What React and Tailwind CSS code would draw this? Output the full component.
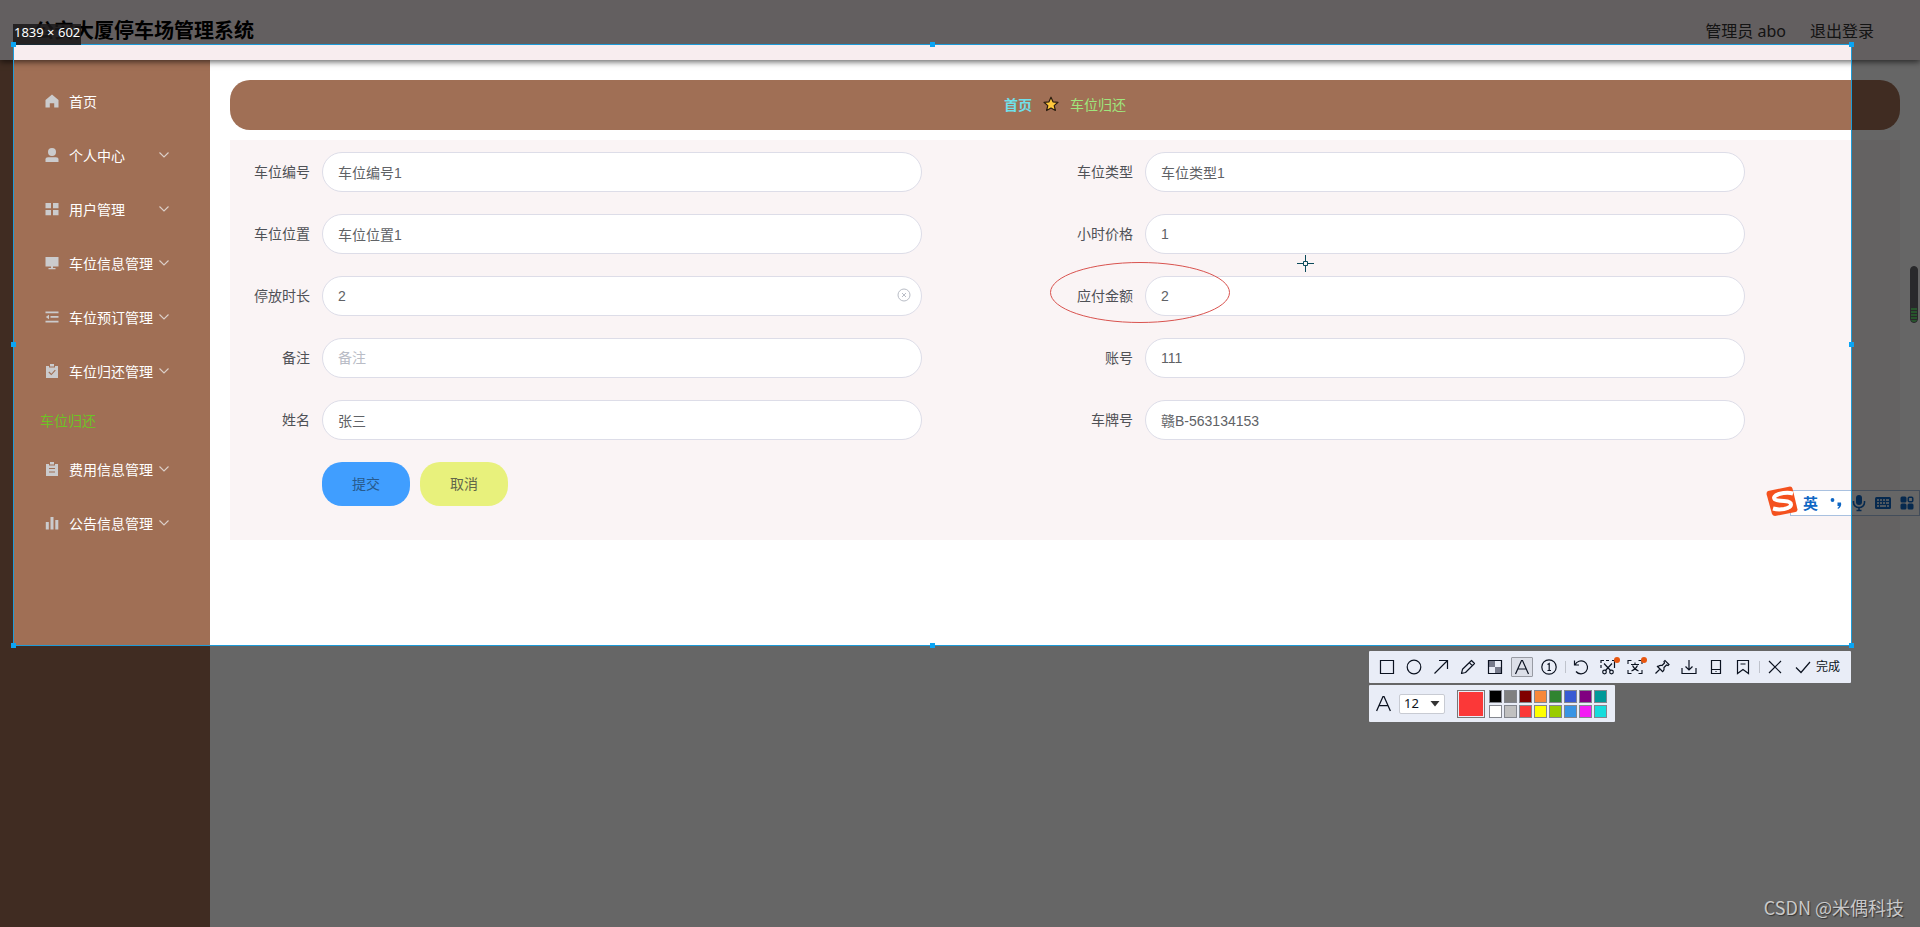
const ICONS = {
  home: <path d="M7 .5 0.5 6v7.5h4.3V9.3h4.4v4.2h4.3V6z" />,
  user: (
    <>
      <circle cx="7" cy="4" r="4" />
      <path d="M.5 14v-2.500C.5 10 1.500 9.200 3 9.200h8c1.500 0 2.500.8 2.500 2.300V14z" />
    </>
  ),
  grid: <path d="M.5 1h5.500v5.200H.5zM8 1h5.500v5.200H8zM.5 8h5.500v5.200H.5zM8 8h5.500v5.200H8z" />,
  monitor: <path d="M.5 1h13v9.500h-5.500v1.500h2.500v1.200h-7V12H6v-1.500H.5z" />,
  fold: <path d="M.5 1.500h13v1.700H.5zM5.500 6.100h8v1.700h-8zM.5 10.700h13v1.700H.5zM.8 7l3.200-2.200v4.400z" />,
  checked: (
    <>
      <path d="M1 2h3v1.500h6V2h3v12H1zM5 0h4v2.500H5z" />
      <path d="M3.800 8l2.500 2.500 4-4.300" fill="none" stroke="#a06f55" strokeWidth="1.100" />
    </>
  ),
  order: (
    <>
      <path d="M1 2h3v1.500h6V2h3v12H1zM5 0h4v2.500H5z" />
      <path d="M4 6.500h6M4 10h6" fill="none" stroke="#a06f55" strokeWidth="1.200" />
    </>
  ),
  chart: <path d="M.8 6h3v7.500h-3zM5.500 1h3v12.500h-3zM10.300 4h3v9.500h-3z" />,
};

const MENU = [
  { icon: "home", label: "首页" },
  { icon: "user", label: "个人中心", more: true },
  { icon: "grid", label: "用户管理", more: true },
  { icon: "monitor", label: "车位信息管理", more: true },
  { icon: "fold", label: "车位预订管理", more: true },
  { icon: "checked", label: "车位归还管理", more: true, child: "车位归还" },
  { icon: "order", label: "费用信息管理", more: true },
  { icon: "chart", label: "公告信息管理", more: true },
];

const FIELDS = [
  { id: "code", label: "车位编号", value: "车位编号1" },
  { id: "type", label: "车位类型", value: "车位类型1" },
  { id: "place", label: "车位位置", value: "车位位置1" },
  { id: "price", label: "小时价格", value: "1" },
  { id: "hours", label: "停放时长", value: "2", clear: true },
  { id: "amount", label: "应付金额", value: "2", circled: true },
  { id: "remark", label: "备注", value: "", placeholder: "备注" },
  { id: "account", label: "账号", value: "111" },
  { id: "name", label: "姓名", value: "张三" },
  { id: "plate", label: "车牌号", value: "赣B-563134153" },
];

const letterA = <path d="M1.500 15 7.500 1.500h1L14.500 15M4 10h8" />;

const TOOLS = [
  { name: "矩形", art: <path d="M1.500 1.500h13v13h-13z" /> },
  { name: "椭圆", art: <circle cx="8" cy="8" r="6.800" /> },
  { name: "箭头", art: <path d="M1.500 14.500 14.500 1.500M6 1.500h8.500V10" /> },
  { name: "画笔", art: <path d="M1.500 14.500l1-4.200L11.500 1.500l3 3-9 9zM9.300 3.700l3 3" strokeLinejoin="round" /> },
  {
    name: "马赛克",
    art: (
      <>
        <path d="M1.500 1.500h6.500v6.500h-6.500zM8 8h6.500v6.500H8z" fill="#777b8c" stroke="none" />
        <path d="M1.500 1.500h13v13h-13z" />
      </>
    ),
  },
  { name: "文字", art: letterA, active: true },
  { name: "序号", art: <><circle cx="8" cy="8" r="7.200" /><path d="M6.500 5.500 8.200 4.500v7M6.500 11.500h3.500" /></> },
  null,
  { name: "撤销", art: <path d="M1.500 1.500v4.500h4.500M2 6a6.500 6.500 0 1 1 1 6.500" /> },
  {
    name: "截图",
    dot: true,
    art: <><path d="M1 4V1.500h3M12 1.500h2.500V9M1 6v3M6 1.500h3M4 4.500l6.500 7M12 4.500l-6.500 7" /><circle cx="4.500" cy="13" r="1.800" /><circle cx="11.500" cy="13" r="1.800" /></>,
  },
  {
    name: "翻译",
    dot: true,
    art: <path d="M1 5V1.500h3.500M11.500 1.500H15V5M1 11v3.500h3.500M11.500 14.500H15V11M8 3.500v2M4 5.500h8M5.500 6.500q1.500 3.500 6 5.500M10.500 6.500q-1.500 3.500-6 5.500" strokeWidth="1.100" />,
  },
  { name: "固定", art: <path d="M1.500 14.500l4.500-4.500M3 7l6 6M4 7.500q2-1.500 4-1l2.500-2.500-.5-1.500 1-1 4 4-1 1-1.500-.5-2.500 2.500q.5 2-1 4" /> },
  { name: "保存", art: <path d="M8 1v10M4.500 7.500 8 11l3.500-3.500M1 9v5.500h14V9" /> },
  { name: "手机", art: <path d="M3.500 1.500h9v13h-9zM3.500 10.500h9M7.500 12.500h1" /> },
  { name: "收藏", art: <path d="M2.500 1.500h11v13L8 10.500l-5.500 4zM5.500 5h5" /> },
  null,
  { name: "关闭", art: <path d="M2 2l12 12M14 2 2 14" /> },
];

const SWATCHES = [
  ["黑", "bg-black"], ["灰", "bg-[#808080]"], ["深红", "bg-[#800000]"], ["橙", "bg-[#f7883a]"],
  ["绿", "bg-[#308430]"], ["蓝", "bg-[#385ad3]"], ["紫", "bg-[#800080]"], ["青", "bg-[#009999]"],
  ["白", "bg-white"], ["浅灰", "bg-[#c0c0c0]"], ["红", "bg-[#fb3838]"], ["黄", "bg-[#ffff00]"],
  ["黄绿", "bg-[#99cc00]"], ["浅蓝", "bg-[#3894e4]"], ["洋红", "bg-[#f31bf3]"], ["浅青", "bg-[#16dcdc]"],
];

function Header() {
  return (
    <header className="relative flex h-[60px] items-center justify-between bg-[#f8edef] pl-[34px] pr-[46px] pt-[2px] shadow-[0_2px_6px_rgba(0,0,0,0.6)]">
      <h1 className="text-[20px] font-bold text-black">公安大厦停车场管理系统</h1>
      <nav className="flex gap-6 text-[16px] text-[#333]">
        <span>管理员 abo</span>
        <a href="#logout">退出登录</a>
      </nav>
    </header>
  );
}

function Sidebar() {
  return (
    <aside className="w-[210px] shrink-0 bg-[#a06f55] pt-[14px]">
      <ul>
        {MENU.map((item) => (
          <li key={item.label}>
            <button type="button" className="flex h-[54px] w-full items-center gap-[10px] pl-[45px] text-[14px] text-white">
              <svg viewBox="0 0 14 14" className="size-[14px] fill-[#cbcbcd]">{ICONS[item.icon]}</svg>
              <span className="w-[84px] text-left">{item.label}</span>
              {item.more && (
                <svg viewBox="0 0 10 6" className="-ml-1 h-[6px] w-[10px] fill-none stroke-[#dcd0ca]">
                  <path d="M.5.5 5 5 9.500.5" strokeWidth="1.100" />
                </svg>
              )}
            </button>
            {item.child && (
              <a href="#return" className="flex h-[44px] items-center pl-10 text-[14px] text-[#6cc424]">{item.child}</a>
            )}
          </li>
        ))}
      </ul>
    </aside>
  );
}

function Field({ field }) {
  return (
    <div className="relative mb-[22px] flex h-10">
      <label htmlFor={field.id} className="w-20 shrink-0 pr-3 text-right text-[14px] leading-10 text-[#4f5156]">{field.label}</label>
      <div className="relative w-full max-w-[600px]">
        <input
          id={field.id}
          defaultValue={field.value}
          placeholder={field.placeholder}
          className="h-10 w-full rounded-[20px] border border-[#dddde8] bg-white px-[15px] text-[14px] text-[#606266] outline-none placeholder:text-[#b9bcc6]"
        />
        {field.clear && (
          <button type="button" aria-label="清空" className="absolute right-[11px] top-3 size-[14px]">
            <svg viewBox="0 0 14 14" className="size-[14px] fill-none stroke-[#b9bdc6]">
              <circle cx="7" cy="7" r="6" />
              <path d="M5 5l4 4M9 5 5 9" />
            </svg>
          </button>
        )}
      </div>
      {field.circled && (
        <svg viewBox="0 0 180 62" className="pointer-events-none absolute -top-[15px] left-[-15px] h-[62px] w-[180px] fill-none stroke-[#d9534f]">
          <ellipse cx="90" cy="31.500" rx="89.500" ry="30" />
        </svg>
      )}
    </div>
  );
}

function Content() {
  return (
    <main className="min-w-0 flex-1 bg-white p-5">
      <nav className="flex h-[50px] items-center justify-center rounded-[20px] bg-[#a06f55] pb-[2px] text-[14px]">
        <a href="#home" className="font-bold text-[#6fe0ea]">首页</a>
        <svg viewBox="0 0 16 16" className="mx-[11px] size-4">
          <path d="M8 1.200l2 4.600 5 .5-3.800 3.300 1.200 4.900L8 12l-4.400 2.500 1.200-4.900L1 6.300l5-.5z" fill="#ffc83d" stroke="#2a1c10" strokeWidth="1.200" strokeLinejoin="round" />
        </svg>
        <span className="text-[#9fe67c]">车位归还</span>
      </nav>
      <form className="mt-[10px] bg-[#faf4f5] p-3" onSubmit={(e) => e.preventDefault()}>
        <div className="grid grid-cols-2">
          {FIELDS.map((f) => <Field key={f.id} field={f} />)}
        </div>
        <div className="mb-[22px] flex gap-[10px] pl-20 text-[14px]">
          <button type="submit" className="h-11 w-[88px] rounded-[20px] bg-[#409eff] text-[#285a8c]">提交</button>
          <button type="button" className="h-11 w-[88px] rounded-[20px] bg-[#e8f17c] text-[#62664a]">取消</button>
        </div>
      </form>
    </main>
  );
}

function InputMethodBar() {
  return (
    <div className="absolute right-0 top-[486px] h-8 w-[154px]">
      <div className="ml-6 mt-1 flex h-[26px] items-center border border-[#a9c1e0] bg-white pl-3 text-[#0f67c4]">
        <span className="w-[24px] text-[15px] font-bold">英</span>
        <svg viewBox="0 0 12 14" className="ml-[3px] h-[14px] w-3 fill-current">
          <circle cx="2.500" cy="4" r="1.900" />
          <path d="M7.500 6.500h3.500q1 4-3 6.500l-.5-1q1.500-1 1.500-2H7.500z" />
        </svg>
        <svg viewBox="0 0 14 18" className="ml-[10px] h-[18px] w-[14px] fill-current">
          <rect x="4" y="1" width="6" height="10" rx="3" />
          <path d="M1.500 7v1.500a5.500 5 0 0 0 11 0V7M7 13v3M4.500 16.500h5" fill="none" stroke="currentColor" strokeWidth="1.600" />
        </svg>
        <svg viewBox="0 0 16 12" className="ml-[9px] h-3 w-4">
          <rect width="16" height="12" rx="1.500" fill="currentColor" />
          <path d="M2 3h2M5 3h2M8 3h2M11 3h3M2 6h2M5 6h2M8 6h2M11 6h3M2 9h2M5 9h6M12 9h2" stroke="#fff" strokeWidth="1.700" />
        </svg>
        <svg viewBox="0 0 14 14" className="ml-[9px] size-[14px] fill-current">
          <rect x=".5" y=".5" width="6" height="6" rx="1.500" />
          <rect x=".5" y="7.500" width="6" height="6" rx="1.500" />
          <rect x="7.500" y="7.500" width="6" height="6" rx="1.500" />
          <rect x="8.300" y="1.300" width="4.400" height="4.400" rx="1" fill="none" stroke="currentColor" strokeWidth="1.600" />
        </svg>
      </div>
      <svg viewBox="0 0 32 32" className="absolute left-0 top-0 size-8">
        <path d="M2 5 24 .5q2 0 2.500 2l5 21q0 2-2 2.500L9 30q-2 0-3-2L.5 8Q.5 5.500 2 5z" fill="#f4511e" />
        <path d="M27 7.500q-6-1.500-14 .5-7 2.500-4 5.500 2 1.500 9 1.500 7 .5 7 3.500 0 3-7 4.500-6 1-11-.5" fill="none" stroke="#fff" strokeWidth="4" />
      </svg>
    </div>
  );
}

function Handle({ className }) {
  return <span className={"absolute size-[5px] bg-[#0aa5f5] " + className} />;
}

function CaptureTools() {
  return (
    <div className="absolute right-0 top-full mt-[6px] flex flex-col items-start gap-[2px] text-[#0b1220]">
      <div className="flex h-8 items-center rounded-[1px] bg-[#e9edf7] pl-[5px] pr-[11px]">
        {TOOLS.map((t, i) =>
          t ? (
            <button key={t.name} type="button" aria-label={t.name} className="relative flex h-8 w-[27px] items-center justify-center">
              <span className={t.active ? "flex h-5 w-[22px] items-center justify-center rounded-[1px] border border-[#989ba3] bg-[#dcdfe8]" : "flex"}>
                <svg viewBox="0 0 16 16" className="size-4 fill-none stroke-current" strokeWidth="1.200">{t.art}</svg>
              </span>
              {t.dot && <span className="absolute right-[2px] top-[6px] size-[6px] rounded-full bg-[#e8560f]" />}
            </button>
          ) : (
            <span key={i} className="mx-[2px] h-3 w-px bg-[#bfc3cc]" />
          )
        )}
        <button type="button" className="ml-[6px] flex items-center gap-[5px] whitespace-nowrap text-[12px]">
          <svg viewBox="0 0 16 16" className="size-4 fill-none stroke-current" strokeWidth="1.200"><path d="M1 8.500l5 5L15 3" /></svg>
          完成
        </button>
      </div>
      <div className="flex h-[37px] items-center rounded-[1px] bg-[#e9edf7] pl-[6px] pr-2">
        <svg viewBox="0 0 16 16" className="size-[17px] fill-none stroke-current" strokeWidth="1.200">{letterA}</svg>
        <div className="relative ml-[7px] flex items-center">
          <select aria-label="字号" defaultValue="12" className="h-5 w-[46px] appearance-none rounded-[2px] border border-[#c8cbd3] bg-white pb-[2px] pl-1 font-['Noto_Sans'] text-[13px] leading-4 outline-none">
            <option>12</option>
            <option>16</option>
          </select>
          <svg viewBox="0 0 10 6" className="pointer-events-none absolute right-[5px] h-[6px] w-[10px] fill-[#333]"><path d="M.5 0h9L5 5.500z" /></svg>
        </div>
        <button type="button" aria-label="当前颜色" className="ml-3 size-7 border border-[#777] bg-[#fb3838] shadow-[inset_0_0_0_1px_#e9edf7]" />
        <div className="ml-1 grid grid-cols-8 gap-[2px]">
          {SWATCHES.map(([name, color]) => (
            <button key={name} type="button" aria-label={name} className={"size-[13px] border border-[#83868e] " + color} />
          ))}
        </div>
      </div>
    </div>
  );
}

function CaptureOverlay() {
  return (
    <>
      <div className="pointer-events-none absolute inset-0 overflow-hidden">
        <div className="absolute left-[13px] right-[68px] top-11 h-[602px] shadow-[0_0_0_3000px_rgba(0,0,0,0.6)]" />
      </div>
      <div className="absolute left-[13px] right-[68px] top-11 h-[602px] border border-[#1d9bd8]">
        <span className="absolute -left-px bottom-full flex h-[21px] items-center whitespace-nowrap bg-[#1a1819]/85 px-px pb-[3px] font-['Noto_Sans'] text-[13px] text-white">1839 × 602</span>
        <Handle className="-left-[3px] -top-[3px]" />
        <Handle className="-top-[3px] left-[calc(50%-3px)]" />
        <Handle className="-right-[3px] -top-[3px]" />
        <Handle className="-left-[3px] top-[calc(50%-3px)]" />
        <Handle className="-right-[3px] top-[calc(50%-3px)]" />
        <Handle className="-bottom-[3px] -left-[3px]" />
        <Handle className="-bottom-[3px] left-[calc(50%-3px)]" />
        <Handle className="-bottom-[3px] -right-[3px]" />
        <svg viewBox="0 0 17 17" className="absolute left-[1283px] top-[210px] size-[17px] fill-none stroke-[#0b4a5a]">
          <path d="M8.500 0v6M8.500 11v6M0 8.500h6M11 8.500h6M6.500 6.500h4v4h-4z" />
        </svg>
        <CaptureTools />
      </div>
    </>
  );
}

export default function App() {
  return (
    <div className="relative flex min-h-screen flex-col overflow-hidden bg-white font-['Noto_Sans','Noto_Sans_CJK_SC',sans-serif] [&_form]:font-['Liberation_Sans','Noto_Sans_CJK_SC',sans-serif]">
      <Header />
      <div className="flex flex-1">
        <Sidebar />
        <Content />
      </div>
      <InputMethodBar />
      <CaptureOverlay />
      <div className="absolute right-[2px] top-[266px] flex h-[57px] w-2 flex-col justify-end overflow-hidden rounded-full border border-[#29292b] bg-[#29292b]">
        <div className="h-[14px] bg-[repeating-linear-gradient(#27552c_0_2px,#29292b_2px_3px)]" />
      </div>
      <p className="absolute bottom-[6px] right-4 font-['Noto_Sans_CJK_SC',sans-serif] text-[18px] text-[#c9c9c9] [text-shadow:1px_1px_1px_#333]">CSDN @米偶科技</p>
    </div>
  );
}
